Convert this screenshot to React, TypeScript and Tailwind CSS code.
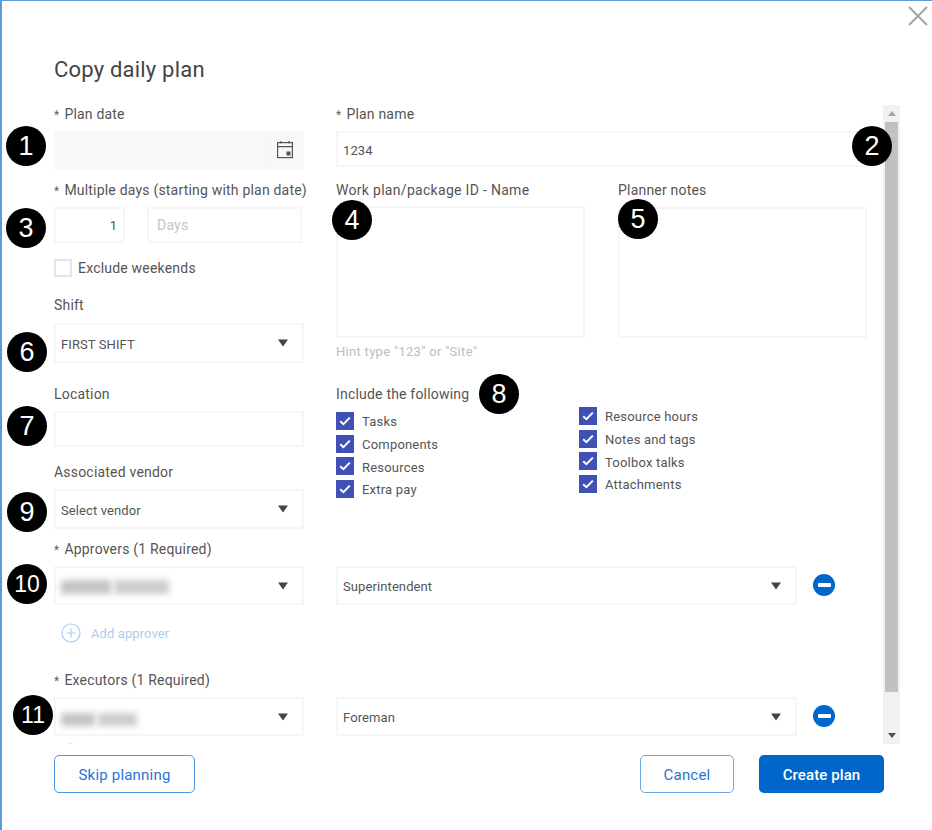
import React from 'react';

const labelClass = "h-[18px] leading-[18px] text-[14px] tracking-[0.2px] text-[#555] whitespace-nowrap";
const boxClass = "border-2 border-[#f6f6f6] bg-white";

function Label({ text, required, className = "" }: { text: string; required?: boolean; className?: string }) {
  return (
    <div className={`${labelClass} ${className}`}>
      {required && <span className="mr-[5px] text-[12px] text-[#666]">*</span>}
      {text}
    </div>
  );
}

function Arrow() {
  return (
    <svg width="10" height="8" viewBox="0 0 10 8" className="absolute right-[14px] top-[14px]">
      <path d="M0 0.5h10L5 7.5z" fill="#444" />
    </svg>
  );
}

function Select({ children, className = "" }: { children?: React.ReactNode; className?: string }) {
  return (
    <div className={`relative flex items-center pl-[5px] pt-[3px] text-[13px] tracking-[0.1px] text-[#555] ${boxClass} ${className}`}>
      {children}
      <Arrow />
    </div>
  );
}

// nome borrado na captura original
function Blurred({ first, second, height }: { first: string; second: string; height: string }) {
  return (
    <div className="flex gap-[3px]">
      <div className={`${height} ${first} bg-[#c4c4c4] blur-[3px]`} />
      <div className={`${height} ${second} bg-[#cccccc] blur-[3px]`} />
    </div>
  );
}

function Check({ label }: { label: string }) {
  return (
    <div className="flex h-[18px] items-center gap-[8px] text-[13px] tracking-[0.2px] text-[#555]">
      <div className="flex h-[18px] w-[18px] items-center justify-center bg-[#3f51b5]">
        <svg width="12" height="10" viewBox="0 0 12 10" fill="none">
          <path d="M1.2 5.2 4.4 8.2 10.8 1.6" stroke="#fff" strokeWidth="2" />
        </svg>
      </div>
      <span className="pt-[2px]">{label}</span>
    </div>
  );
}

function Minus() {
  return (
    <div className="mb-[1px] ml-[16px] flex h-[22px] w-[22px] items-center justify-center rounded-full bg-[#0066cc]">
      <div className="h-[4px] w-[13px] rounded-[1px] bg-white" />
    </div>
  );
}

function AddIcon() {
  return (
    <svg width="20" height="20" viewBox="0 0 20 20" fill="none" stroke="#a9cdf0" strokeWidth="1.2">
      <circle cx="10" cy="10" r="9" />
      <path d="M10 5.5v9M5.5 10h9" />
    </svg>
  );
}

function Badge({ n, className }: { n: number; className: string }) {
  return (
    <div className={`absolute flex h-[40px] w-[40px] items-center justify-center rounded-full bg-black font-['Liberation_Sans',sans-serif] text-white ${n > 9 ? 'text-[23px]' : 'text-[27px]'} ${className}`}>
      {n}
    </div>
  );
}

export default function App() {
  return (
    <div className="relative flex h-[830px] w-[932px] flex-col overflow-hidden border-l-2 border-t border-[#5b9bd5] bg-white font-['Roboto',sans-serif]">
      {/* fechar */}
      <svg width="20" height="20" viewBox="0 0 20 20" className="absolute right-[4px] top-[5px]" stroke="#9fa9a9" strokeWidth="2.2">
        <path d="M1 1l18 18M19 1 1 19" />
      </svg>

      <h1 className="ml-[52px] mt-[55px] mb-[21px] h-[28px] text-[22px] leading-[28px] tracking-[0.2px] text-[#444]">Copy daily plan</h1>

      <div className="ml-[52px] flex h-[639px] overflow-hidden">
        <div className="w-[829px] shrink-0">
          <div className="grid grid-cols-[250px_1fr] gap-x-[32px]">
            {/* coluna esquerda */}
            <div className="flex flex-col">
              <Label text="Plan date" required className="mb-[8px]" />
              <div className="flex h-[39px] bg-[#f8f8f8]">
                <div className="flex-1 border-r border-[#f3f3f3]" />
                <div className="flex w-[37px] items-center justify-center pb-[2px] pr-[2px]">
                  <svg width="18" height="19" viewBox="0 0 18 19" fill="none" stroke="#555" strokeWidth="1.2">
                    <rect x="1.6" y="2.6" width="14.8" height="15" />
                    <path d="M1.6 6.6h14.8M5 1v2.6M13 1v2.6" />
                    <rect x="10.5" y="11.5" width="4" height="4" fill="#555" stroke="none" />
                  </svg>
                </div>
              </div>
              <Label text="Multiple days (starting with plan date)" required className="mt-[11px] mb-[8px]" />
              <div className="flex gap-[22px]">
                <div className={`flex h-[36px] w-[71px] items-center justify-end pr-[6px] pt-[1px] text-[13px] text-[#555] ${boxClass}`}>1</div>
                <div className={`flex h-[36px] w-[155px] items-center pl-[8px] pt-[1px] text-[14px] tracking-[0.2px] text-[#c4c4c4] ${boxClass}`}>Days</div>
              </div>
              <div className="mt-[15px] flex h-[19px] items-center gap-[6px] text-[14px] tracking-[0.2px] text-[#555]">
                <div className="h-[18px] w-[18px] border-2 border-[#e4e4e4]" />
                <span className="pt-[1px]">Exclude weekends</span>
              </div>
              <Label text="Shift" className="mt-[19px] mb-[9px]" />
              <Select className="h-[40px]">FIRST SHIFT</Select>
              <Label text="Location" className="mt-[22px] mb-[8px]" />
              <div className={`h-[36px] ${boxClass}`} />
              <Label text="Associated vendor" className="mt-[16px] mb-[8px]" />
              <Select className="h-[40px]">Select vendor</Select>
            </div>

            {/* coluna direita */}
            <div className="flex flex-col">
              <Label text="Plan name" required className="mb-[8px]" />
              <div className={`flex h-[36px] w-[532px] items-center pl-[5px] pt-[3px] text-[13px] tracking-[0.1px] text-[#555] ${boxClass}`}>1234</div>
              <div className="mt-[14px] grid grid-cols-[249px_249px] gap-x-[33px]">
                <div>
                  <Label text="Work plan/package ID - Name" className="mb-[7px] tracking-[0.3px]" />
                  <div className={`h-[132px] ${boxClass}`} />
                </div>
                <div>
                  <Label text="Planner notes" className="mb-[8px]" />
                  <div className={`h-[131px] ${boxClass}`} />
                </div>
              </div>
              <div className="mt-[5px] h-[18px] text-[13px] leading-[18px] tracking-[0.3px] text-[#bdbdbd]">Hint type "123" or "Site"</div>
              <Label text="Include the following" className="mt-[24px]" />
              <div className="grid grid-cols-[243px_1fr]">
                <div className="mt-[9px] flex flex-col gap-[4.67px]">
                  <Check label="Tasks" />
                  <Check label="Components" />
                  <Check label="Resources" />
                  <Check label="Extra pay" />
                </div>
                <div className="mt-[4px] flex flex-col gap-[4.67px]">
                  <Check label="Resource hours" />
                  <Check label="Notes and tags" />
                  <Check label="Toolbox talks" />
                  <Check label="Attachments" />
                </div>
              </div>
            </div>
          </div>

          <Label text="Approvers (1 Required)" required className="mt-[11px] mb-[8px]" />
          <div className="flex items-center">
            <Select className="h-[39px] w-[250px]"><Blurred first="w-[50px]" second="w-[55px]" height="h-[14px]" /></Select>
            <Select className="ml-[32px] h-[39px] w-[461px]">Superintendent</Select>
            <Minus />
          </div>
          <div className="mt-[18px] flex h-[20px] items-center gap-[10px] pl-[7px] text-[13px] tracking-[0.1px] text-[#a9cdf0]">
            <AddIcon />
            <span className="pt-[1px]">Add approver</span>
          </div>

          <Label text="Executors (1 Required)" required className="mt-[28px] mb-[8px]" />
          <div className="flex items-center">
            <Select className="h-[39px] w-[250px]"><div className="pt-[3px]"><Blurred first="w-[34px]" second="w-[39px]" height="h-[13px]" /></div></Select>
            <Select className="ml-[32px] h-[39px] w-[461px]">Foreman</Select>
            <Minus />
          </div>
          {/* botão seguinte, cortado pela rolagem */}
          <div className="mt-[7px] pl-[7px]">
            <AddIcon />
          </div>
        </div>

        {/* barra de rolagem */}
        <div className="flex h-full w-[17px] shrink-0 flex-col items-center bg-[#f1f1f1]">
          <div className="flex h-[17px] items-center justify-center">
            <svg width="8" height="5" viewBox="0 0 8 5"><path d="M4 0l4 5H0z" fill="#a3a3a3" /></svg>
          </div>
          <div className="h-[570px] w-[13px] bg-[#c1c1c1]" />
          <div className="flex-1" />
          <div className="flex h-[17px] items-center justify-center">
            <svg width="8" height="5" viewBox="0 0 8 5"><path d="M0 0h8L4 5z" fill="#505050" /></svg>
          </div>
        </div>
      </div>

      <div className="ml-[52px] mt-[11px] flex w-[830px] items-center justify-between">
        <button className="h-[38px] w-[141px] rounded-[5px] border border-[#4f97e0] bg-white pt-[2px] text-[15px] tracking-[0.2px] text-[#1f76d2]">Skip planning</button>
        <div className="flex gap-[25px]">
          <button className="h-[38px] w-[94px] rounded-[5px] border border-[#6aa8e6] bg-white pt-[2px] text-[15px] tracking-[0.2px] text-[#1f76d2]">Cancel</button>
          <button className="h-[38px] w-[125px] rounded-[5px] bg-[#0066cc] pt-[2px] text-[15px] font-medium tracking-[0.1px] text-white">Create plan</button>
        </div>
      </div>

      {/* marcadores numerados */}
      <Badge n={1} className="left-[4px] top-[125px]" />
      <Badge n={2} className="left-[850px] top-[125px]" />
      <Badge n={3} className="left-[4px] top-[207px]" />
      <Badge n={4} className="left-[330px] top-[199px]" />
      <Badge n={5} className="left-[616px] top-[198px]" />
      <Badge n={6} className="left-[5px] top-[331px]" />
      <Badge n={7} className="left-[5px] top-[405px]" />
      <Badge n={8} className="left-[477px] top-[373px]" />
      <Badge n={9} className="left-[5px] top-[491px]" />
      <Badge n={10} className="left-[5px] top-[563px]" />
      <Badge n={11} className="left-[11px] top-[694px]" />
    </div>
  );
}
